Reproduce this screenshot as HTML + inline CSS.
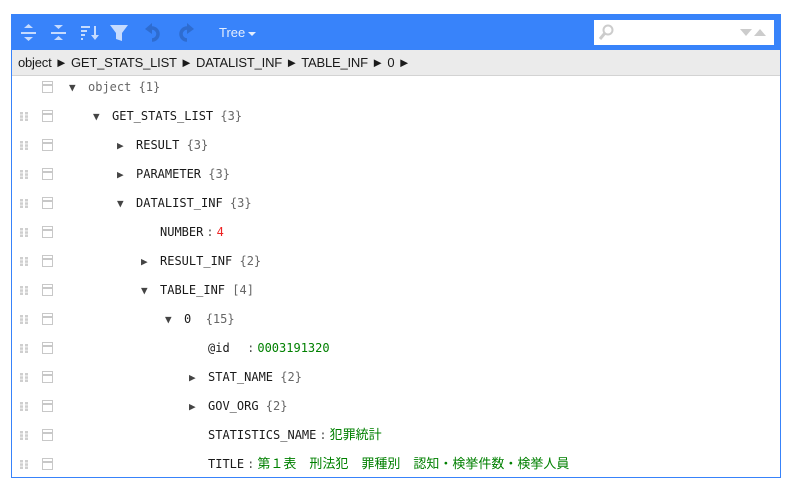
<!DOCTYPE html>
<html><head><meta charset="utf-8"><style>
*{margin:0;padding:0;box-sizing:border-box}
body{width:791px;height:491px;background:#fff;position:relative;overflow:hidden;font-family:"Liberation Sans",Arial,sans-serif}
#frame{position:absolute;left:11px;top:14px;width:770px;height:464px;border:1px solid #3883fa;overflow:hidden}
#tb{position:absolute;left:0;top:0;width:768px;height:35px;background:#3883fa}
#bc{position:absolute;left:0;top:35px;width:768px;height:26px;background:#ebebeb;border-bottom:1px solid #d3d3d3;font-size:13px;color:#1a1a1a;line-height:25px;padding-left:6px;letter-spacing:-0.2px}
.row{position:absolute;left:0;height:29px;width:768px;font-family:"DejaVu Sans Mono","Liberation Mono","Noto Sans CJK JP",monospace;font-size:12px;line-height:29px;color:#1a1a1a}
.row span{position:absolute;top:0;white-space:nowrap}
.dh{position:absolute;left:9px;top:10px;width:8px;height:9px}
.cb{position:absolute;left:31px;top:8px;width:11px;height:12px;border:1.5px solid #c8c8c8}
.cb::after{content:"";position:absolute;left:0;right:0;top:2px;height:1.5px;background:#c8c8c8}
.tri{font-size:11px;color:#444}
.c{color:#666}
.col{color:#555;margin:0 3px}
.g{color:#008000;font-family:"DejaVu Sans Mono","Noto Sans CJK JP",monospace}
.j{font-size:13px}
.r{color:#ee2222}
#search{position:absolute;left:582px;top:5px;width:180px;height:25px;background:#fff}
</style></head><body>
<div id="frame">
<div id="tb">
<svg width="768" height="35" style="position:absolute;left:0;top:0">
<g fill="#c6dbfe">
<rect x="9" y="17" width="15" height="2"/><polygon points="12,13 16.5,9 21,13"/><polygon points="12,22 16.5,26 21,22"/>
<rect x="39" y="17" width="15" height="2"/><polygon points="42,10 46.5,14 51,10"/><polygon points="42,25 46.5,21 51,25"/>
<rect x="69" y="11" width="9" height="2"/><rect x="69" y="15" width="6" height="2"/><rect x="69" y="19" width="4" height="2"/><rect x="69" y="23" width="2" height="2"/>
<rect x="82" y="11" width="2" height="11"/><polygon points="79,20 83,25 87,20"/>
<polygon points="98,10 116,10 110,18 110,26 104,24 104,18"/>
</g>
<g fill="none" stroke="#2e6cd0" stroke-width="3.5">
<path d="M140 13 a6 6 0 1 1 0 12"/><path d="M175 13 a6 6 0 1 0 0 12"/>
</g>
<polygon points="133,14 140,8 140,19" fill="#2e6cd0"/><polygon points="182,14 175,8 175,19" fill="#2e6cd0"/>
<text x="207" y="22" font-family="Liberation Sans" font-size="13" fill="#e3edfe">Tree</text>
<polygon points="236,17 244,17 240,21" fill="#e3edfe"/>
</svg>
<div id="search">
<svg width="180" height="25"><circle cx="14" cy="10" r="4.5" fill="none" stroke="#ccc" stroke-width="2"/><line x1="11" y1="13" x2="6" y2="19" stroke="#ccc" stroke-width="3"/>
<polygon points="146,9 158,9 152,16" fill="#ccc"/><polygon points="160,16 172,16 166,9" fill="#ccc"/></svg>
</div>
</div>
<div id="bc">object ► GET_STATS_LIST ► DATALIST_INF ► TABLE_INF ► 0 ►</div>
</div>
<div id="rows"></div>
<script>
const rows=[
[0,'▼','object','c','{1}',0],
[1,'▼','GET_STATS_LIST','c','{3}'],
[2,'▶','RESULT','c','{3}'],
[2,'▶','PARAMETER','c','{3}'],
[2,'▼','DATALIST_INF','c','{3}'],
[3,'','NUMBER','r','4',1],
[3,'▶','RESULT_INF','c','{2}'],
[3,'▼','TABLE_INF','c','[4]'],
[4,'▼','0 ','c','{15}'],
[5,'','@id  ','g','0003191320',1],
[5,'▶','STAT_NAME','c','{2}'],
[5,'▶','GOV_ORG','c','{2}'],
[5,'','STATISTICS_NAME','g j','犯罪統計',1],
[5,'','TITLE','g j','第１表　刑法犯　罪種別　認知・検挙件数・検挙人員',1]];
let h='';
rows.forEach((r,i)=>{
 const top=73+i*29, kx=88+24*r[0];
 h+=`<div class="row" style="top:${top}px;left:11px">`;
 if(i>0)h+=`<svg class="dh" viewBox="0 0 8 9"><g fill="#cfcfcf"><rect x="0" y="0" width="3" height="2.5"/><rect x="5" y="0" width="3" height="2.5"/><rect x="0" y="3.3" width="3" height="2.5"/><rect x="5" y="3.3" width="3" height="2.5"/><rect x="0" y="6.5" width="3" height="2.5"/><rect x="5" y="6.5" width="3" height="2.5"/></g></svg>`;
 h+=`<div class="cb"></div>`;
 if(r[1])h+=`<span class="tri" style="left:${kx-11-19}px">${r[1]}</span>`;
 let key=r[2];
 if(i==0)h+=`<span style="left:${kx-11}px;color:#666">object <span style="position:static">{1}</span></span>`;
 else if(r[5])h+=`<span style="left:${kx-11}px">${key.replace(/ /g,'&nbsp;')}<span class="col" style="position:static">:</span><span class="${r[3]}" style="position:static">${r[4]}</span></span>`;
 else h+=`<span style="left:${kx-11}px">${key.replace(/ /g,'&nbsp;')}&nbsp;<span class="c" style="position:static">${r[4]}</span></span>`;
 h+='</div>';
});
document.getElementById('rows').innerHTML=h;
</script>
</body></html>
